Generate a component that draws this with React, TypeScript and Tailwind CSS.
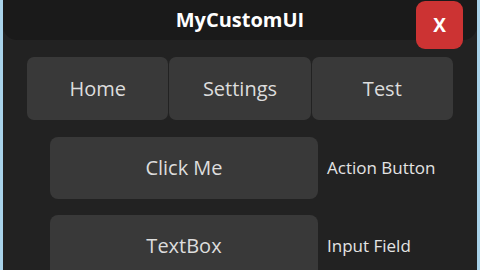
export default function App() {
  const tabs = ["Home", "Settings", "Test"];
  const rows = [
    { label: "Click Me", note: "Action Button" },
    { label: "TextBox", note: "Input Field" },
  ];

  return (
    <div
      className="w-[480px] h-[270px] overflow-hidden bg-[#a9d3ea] px-[3px]"
      style={{ fontFamily: '"Open Sans", "Noto Sans", sans-serif' }}
    >
      <div className="relative h-full bg-[#222222]">
        <div className="h-[40px] bg-[#1a1a1a] rounded-b-[14px] flex items-center justify-center">
          <span className="text-[20px] font-bold text-white">MyCustomUI</span>
        </div>
        <button className="absolute left-[413px] top-[1px] w-[47px] h-[48px] rounded-[9px] bg-[#cc3333] flex items-center justify-center text-[19px] font-bold text-white">
          X
        </button>

        <div className="flex gap-px px-[24px] pt-[17px]">
          {tabs.map((t) => (
            <div
              key={t}
              className="flex-1 h-[63px] rounded-[7px] bg-[#393939] flex items-center justify-center text-[20px] font-medium text-[#dddddd]"
            >
              {t}
            </div>
          ))}
        </div>

        <div className="flex flex-col gap-[16px] pl-[47px] pt-[17px]">
          {rows.map((r) => (
            <div key={r.label} className="flex items-center gap-[9px]">
              <div className="w-[268px] h-[62px] rounded-[8px] bg-[#393939] flex items-center justify-center text-[20px] font-medium text-[#dddddd]">
                {r.label}
              </div>
              <span className="text-[17px] font-medium text-[#e4e4e4]">{r.note}</span>
            </div>
          ))}
        </div>
      </div>
    </div>
  );
}
